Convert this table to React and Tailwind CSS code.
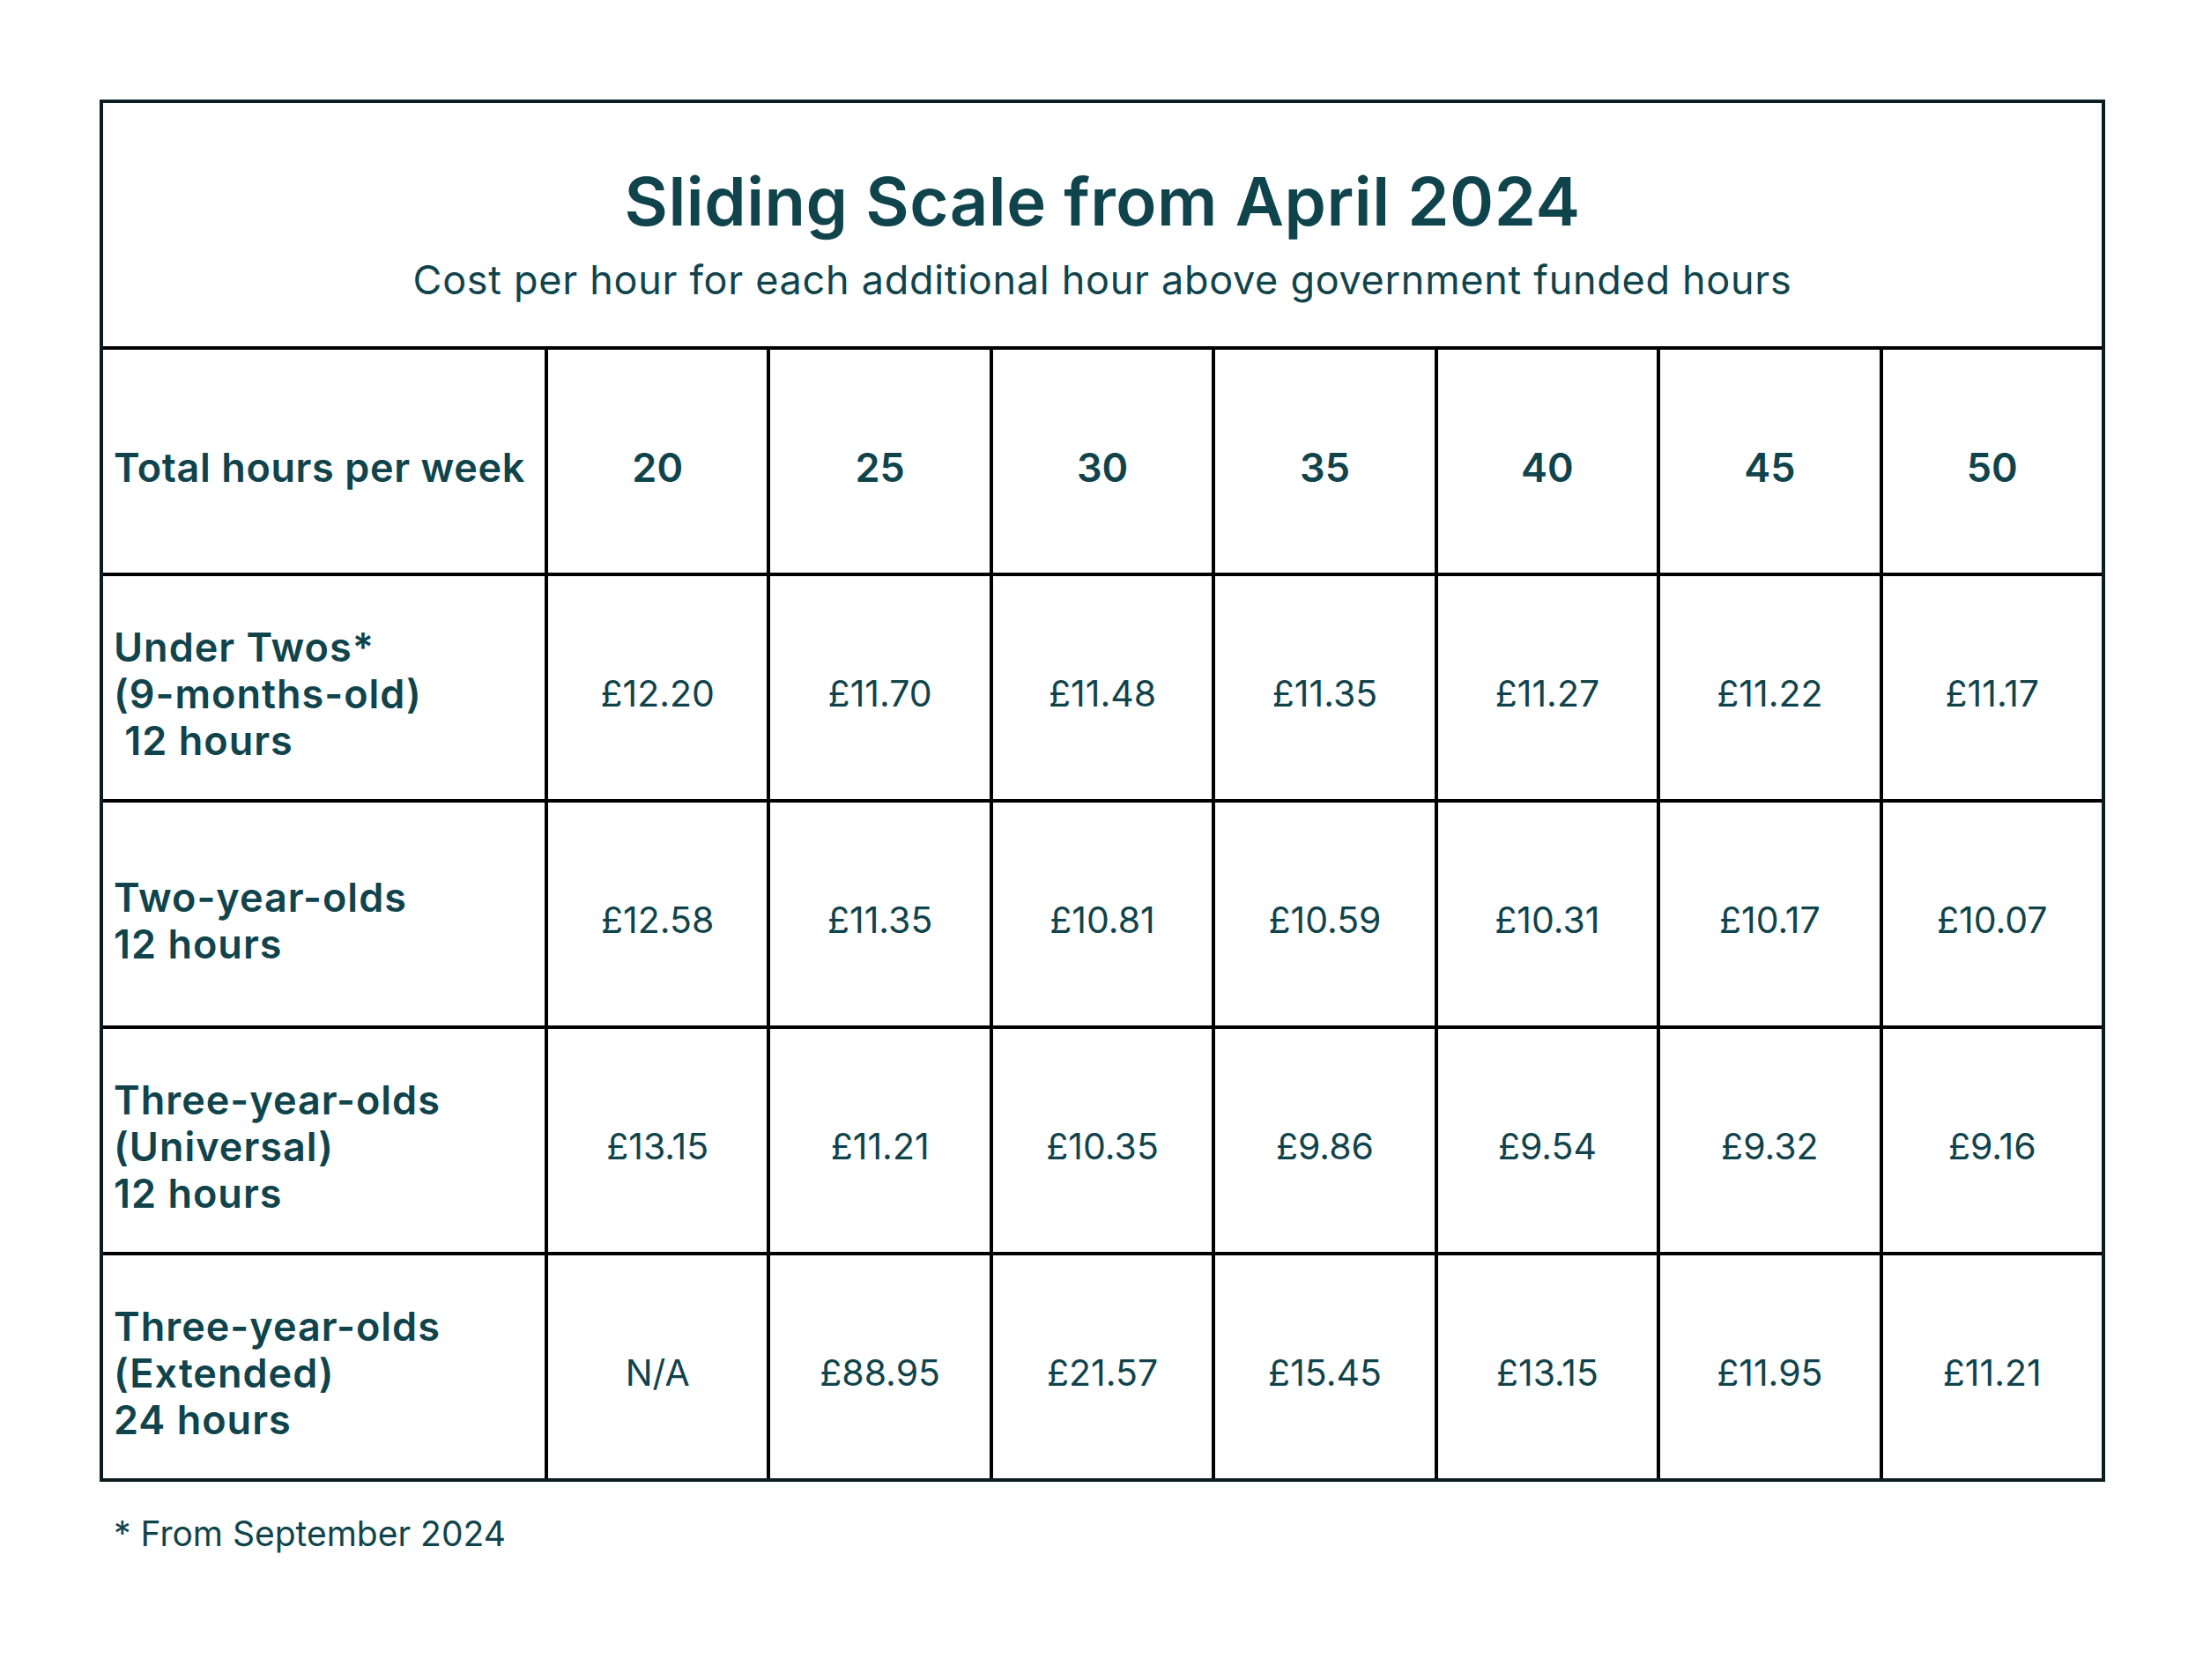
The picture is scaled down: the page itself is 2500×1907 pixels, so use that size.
import React from "react";

const hours = ["20", "25", "30", "35", "40", "45", "50"];

const rows = [
  {
    label: ["Under Twos*", "(9-months-old)", "\u00A012 hours"],
    values: ["£12.20", "£11.70", "£11.48", "£11.35", "£11.27", "£11.22", "£11.17"],
  },
  {
    label: ["Two-year-olds", "12 hours"],
    values: ["£12.58", "£11.35", "£10.81", "£10.59", "£10.31", "£10.17", "£10.07"],
  },
  {
    label: ["Three-year-olds", "(Universal)", "12 hours"],
    values: ["£13.15", "£11.21", "£10.35", "£9.86", "£9.54", "£9.32", "£9.16"],
  },
  {
    label: ["Three-year-olds", "(Extended)", "24 hours"],
    values: ["N/A", "£88.95", "£21.57", "£15.45", "£13.15", "£11.95", "£11.21"],
  },
];

const App = () => {
  return (
    <div className="min-h-screen bg-white pt-[113px] pl-[113px] text-[#10444c] font-['Inter','Noto_Sans',sans-serif]">
      <div className="w-[2276px] border-4 border-[#0a1d20]">
        {/* Title block */}
        <div className="h-[276px] pt-[66px] flex flex-col items-center">
          <h1 className="text-[76px] leading-[90px] font-semibold tracking-[0.5px]">
            Sliding Scale from April 2024
          </h1>
          <p className="mt-[20px] text-[45px] leading-[50px] tracking-[0.7px]">
            Cost per hour for each additional hour above government funded hours
          </p>
        </div>

        {/* Grid */}
        <div className="grid grid-cols-[501px_repeat(7,1fr)] gap-[4px] bg-black pt-[4px]">
          <div className="bg-white h-[253px] flex items-center pl-[12px] pt-[14px] text-[45px] leading-[53px] font-semibold tracking-[0.6px]">
            Total hours per week
          </div>
          {hours.map((h) => (
            <div
              key={h}
              className="bg-white h-[253px] flex items-center justify-center pt-[14px] text-[45px] leading-[53px] font-semibold"
            >
              {h}
            </div>
          ))}

          {rows.map((row, i) => (
            <React.Fragment key={i}>
              <div className="bg-white h-[253px] flex flex-col justify-center pl-[12px] pt-[14px] text-[45px] leading-[53px] font-semibold tracking-[1px]">
                {row.label.map((l, j) => (
                  <span key={j}>{l}</span>
                ))}
              </div>
              {row.values.map((v, j) => (
                <div
                  key={j}
                  className="bg-white h-[253px] flex items-center justify-center pt-[14px] text-[41px] leading-[53px]"
                >
                  {v}
                </div>
              ))}
            </React.Fragment>
          ))}
        </div>
      </div>

      <p className="mt-[36px] pl-[16px] text-[39px] leading-[46px]">* From September 2024</p>
    </div>
  );
};

export default App;
